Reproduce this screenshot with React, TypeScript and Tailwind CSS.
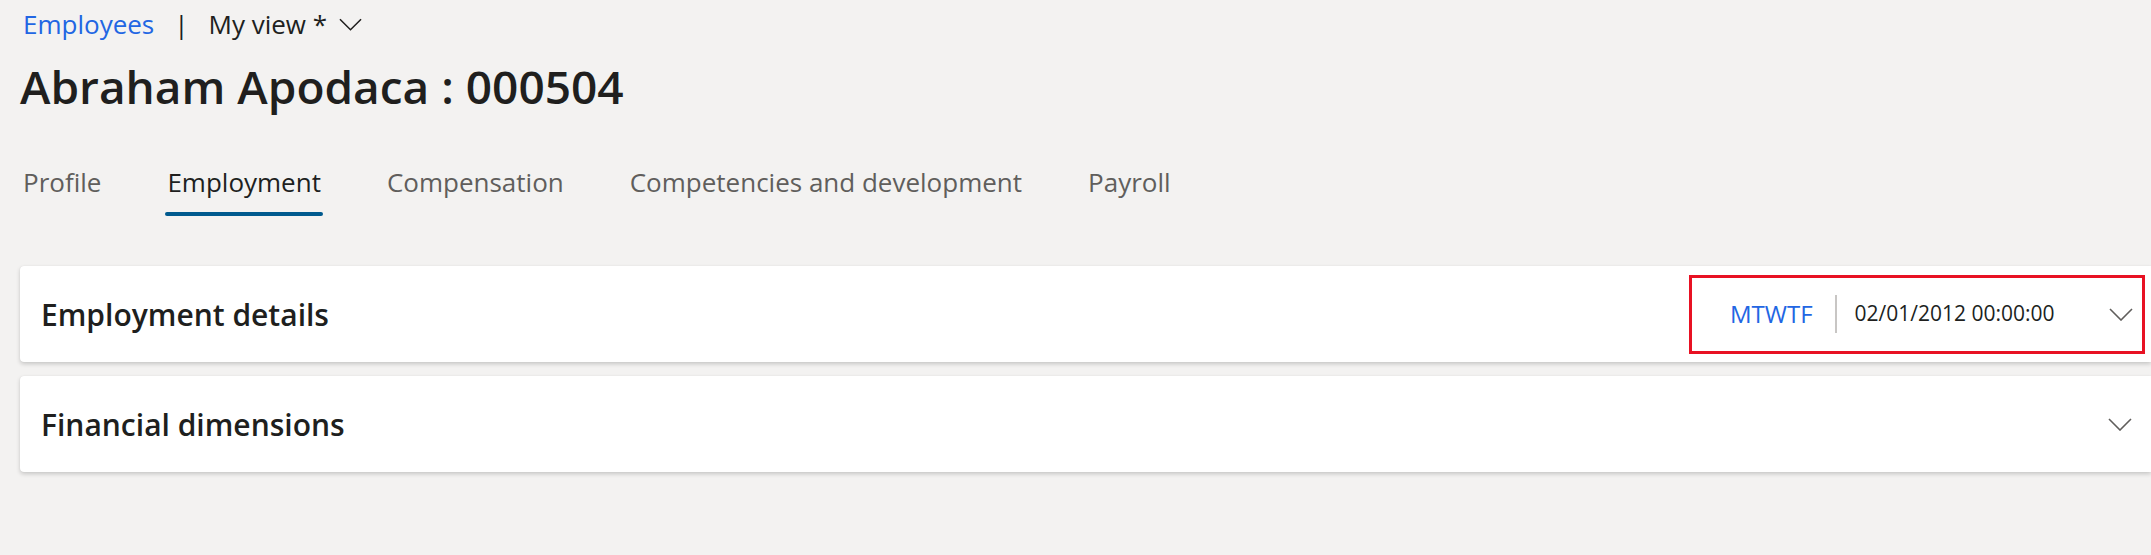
import React from 'react';

const tabs = ['Profile', 'Employment', 'Compensation', 'Competencies and development', 'Payroll'];

function Chevron({ className }: { className?: string }) {
  return (
    <svg viewBox="0 0 24 13" className={className} fill="none" stroke="currentColor" strokeWidth="1.6">
      <polyline points="1,1 12,12 23,1" />
    </svg>
  );
}

function Card({ title, children }: { title: string; children?: React.ReactNode }) {
  return (
    <div className="flex h-[96px] items-center justify-between rounded-l-[4px] bg-white pl-[21px] pr-[19px] shadow-[0_2px_4px_rgba(0,0,0,0.18),0_0_1px_rgba(0,0,0,0.1)]">
      <h2 className="text-[30px] font-semibold text-[#201f1e]">{title}</h2>
      {children ?? <Chevron className="h-[13px] w-[24px] text-[#605e5c]" />}
    </div>
  );
}

export default function App() {
  return (
    <div className="min-h-[555px] bg-[#f3f2f1] pl-[20px] font-['Segoe_UI','Open_Sans',sans-serif] text-[#201f1e]">
      {/* breadcrumb */}
      <div className="flex h-[48px] items-center pl-[3px] text-[26px]">
        <a className="text-[#2266e3]">Employees</a>
        <span className="ml-[20px] mr-[20px] text-[#201f1e]">|</span>
        <button className="flex items-center gap-[12px]">
          <span>My view *</span>
          <Chevron className="h-[13px] w-[23px] text-[#201f1e]" />
        </button>
      </div>

      <h1 className="mt-[10px] text-[46px] font-semibold leading-[56px]">Abraham Apodaca : 000504</h1>

      {/* tabs */}
      <nav className="mt-[48px] flex gap-[62px] pl-[1px]">
        {tabs.map((tab) => (
          <div key={tab} className="flex flex-col items-stretch">
            <span
              className={
                tab === 'Employment'
                  ? 'px-[2px] text-[26px] leading-[40px] text-[#201f1e]'
                  : 'px-[2px] text-[26px] leading-[40px] text-[#605e5c]'
              }
            >
              {tab}
            </span>
            <div
              className={
                tab === 'Employment'
                  ? 'mt-[10px] h-[4px] rounded-full bg-[#005a8e]'
                  : 'mt-[10px] h-[4px]'
              }
            />
          </div>
        ))}
      </nav>

      {/* fast tabs */}
      <div className="mt-[50px] flex flex-col gap-[14px]">
        <Card title="Employment details">
          <div className="mr-[-13px] flex h-[79px] w-[456px] items-center border-[3px] border-[#e81123] pl-[38px] pr-[9px]">
            <span className="text-[24px] text-[#2266e3]">MTWTF</span>
            <div className="ml-[22px] mr-[18px] h-[38px] w-[2px] bg-[#c8c6c4]" />
            <span className="text-[21px] text-[#201f1e]">02/01/2012 00:00:00</span>
            <Chevron className="ml-auto h-[13px] w-[24px] text-[#605e5c]" />
          </div>
        </Card>
        <Card title="Financial dimensions" />
      </div>
    </div>
  );
}
